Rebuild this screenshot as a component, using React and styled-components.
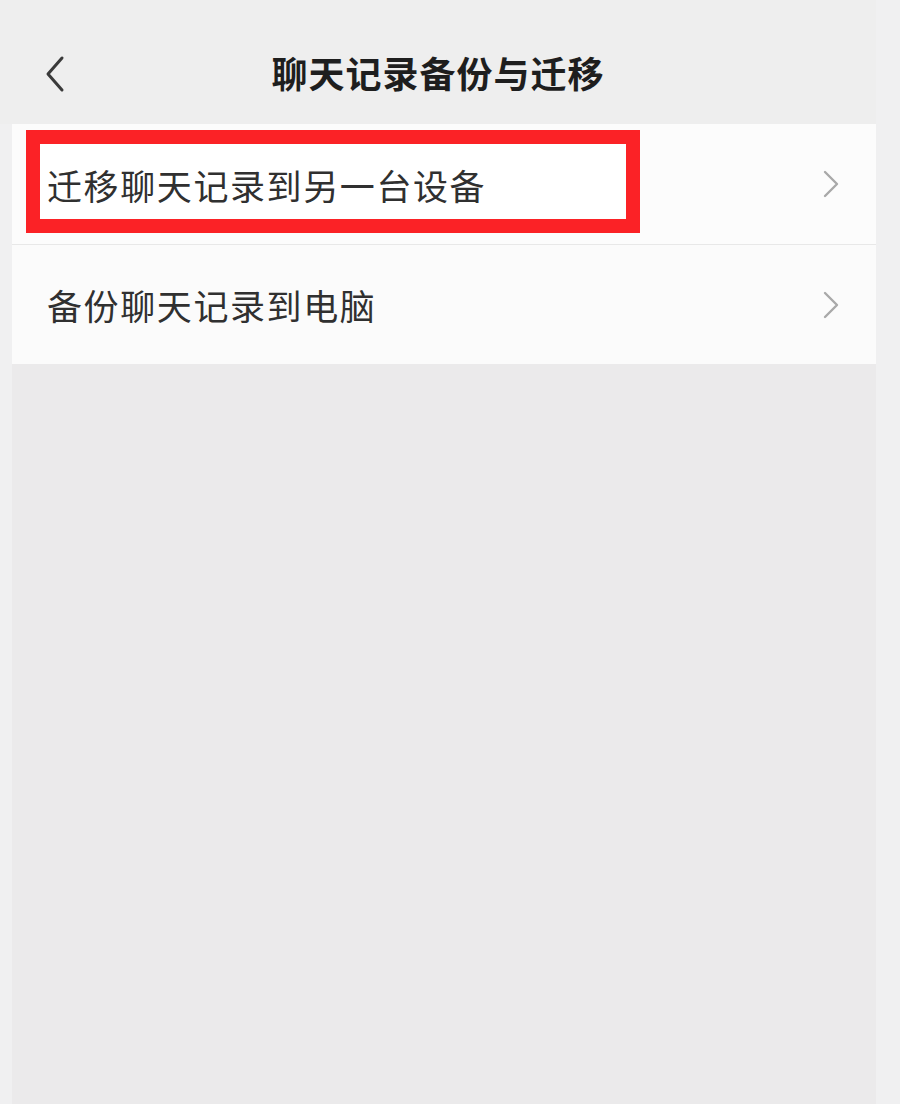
import React from 'react';
import styled, { createGlobalStyle } from 'styled-components';

const GlobalStyle = createGlobalStyle`
  html, body {
    margin: 0;
    padding: 0;
    background: #f0f0f1;
  }
  body {
    font-family: "Noto Sans CJK SC", "Noto Sans", sans-serif;
  }
`;

const Screen = styled.div`
  width: 864px;
  height: 1104px;
  margin-left: 12px;
  background: #ebeaeb;
  display: flex;
  flex-direction: column;
`;

const Header = styled.header`
  height: 124px;
  flex-shrink: 0;
  position: relative;
  display: flex;
  align-items: center;
  justify-content: center;
  background: #eeeeee;
  margin-left: -12px;
  padding: 20px 0 0 12px;
  box-sizing: border-box;
  width: 876px;
`;

const BackButton = styled.button`
  position: absolute;
  left: 38px;
  top: 52px;
  width: 34px;
  height: 44px;
  padding: 0;
  border: 0;
  background: none;
  display: flex;
  align-items: center;
  justify-content: center;
`;

const Title = styled.h1`
  margin: 0;
  font-size: 36px;
  font-weight: 700;
  color: #1e1e1e;
  letter-spacing: 1px;
  transform: translateX(-6px);
`;

const Card = styled.div`
  background: #fdfdfd;
  display: flex;
  flex-direction: column;
`;

const Row = styled.div`
  position: relative;
  height: 120px;
  display: flex;
  align-items: center;
  justify-content: space-between;
  padding: 0 36px 0 35px;
  box-sizing: border-box;
  border-top: ${(p) => (p.$first ? 'none' : '1px solid #e8e8e8')};
  background: ${(p) => (p.$first ? '#fcfcfc' : '#fbfbfb')};
`;

const Label = styled.span`
  font-size: 35px;
  color: #303030;
  letter-spacing: 1.6px;
  margin-top: ${(p) => (p.$first ? '-4px' : '4px')};
`;

const Highlight = styled.div`
  position: absolute;
  left: 14px;
  top: 6px;
  width: 614px;
  height: 103px;
  border: 14px solid #fb2226;
  box-sizing: border-box;
  background: #ffffff;
  z-index: 0;
`;

const LabelLayer = styled.div`
  position: relative;
  z-index: 1;
`;

const Chevron = () => (
  <svg width="18" height="30" viewBox="0 0 18 30">
    <path d="M3 3 L15 15 L3 27" fill="none" stroke="#a9a9a9" strokeWidth="2.4" strokeLinecap="round" strokeLinejoin="round" />
  </svg>
);

const items = ['迁移聊天记录到另一台设备', '备份聊天记录到电脑'];

export default function App() {
  return (
    <>
      <GlobalStyle />
      <Screen>
        <Header>
          <BackButton aria-label="返回">
            <svg width="26" height="40" viewBox="0 0 26 40">
              <path d="M20 4 L6 20 L20 36" fill="none" stroke="#3a3a3a" strokeWidth="3" strokeLinecap="round" strokeLinejoin="round" />
            </svg>
          </BackButton>
          <Title>聊天记录备份与迁移</Title>
        </Header>
        <Card>
          {items.map((text, i) => (
            <Row key={text} $first={i === 0}>
              {i === 0 && <Highlight />}
              <LabelLayer>
                <Label $first={i === 0}>{text}</Label>
              </LabelLayer>
              <Chevron />
            </Row>
          ))}
        </Card>
      </Screen>
    </>
  );
}
